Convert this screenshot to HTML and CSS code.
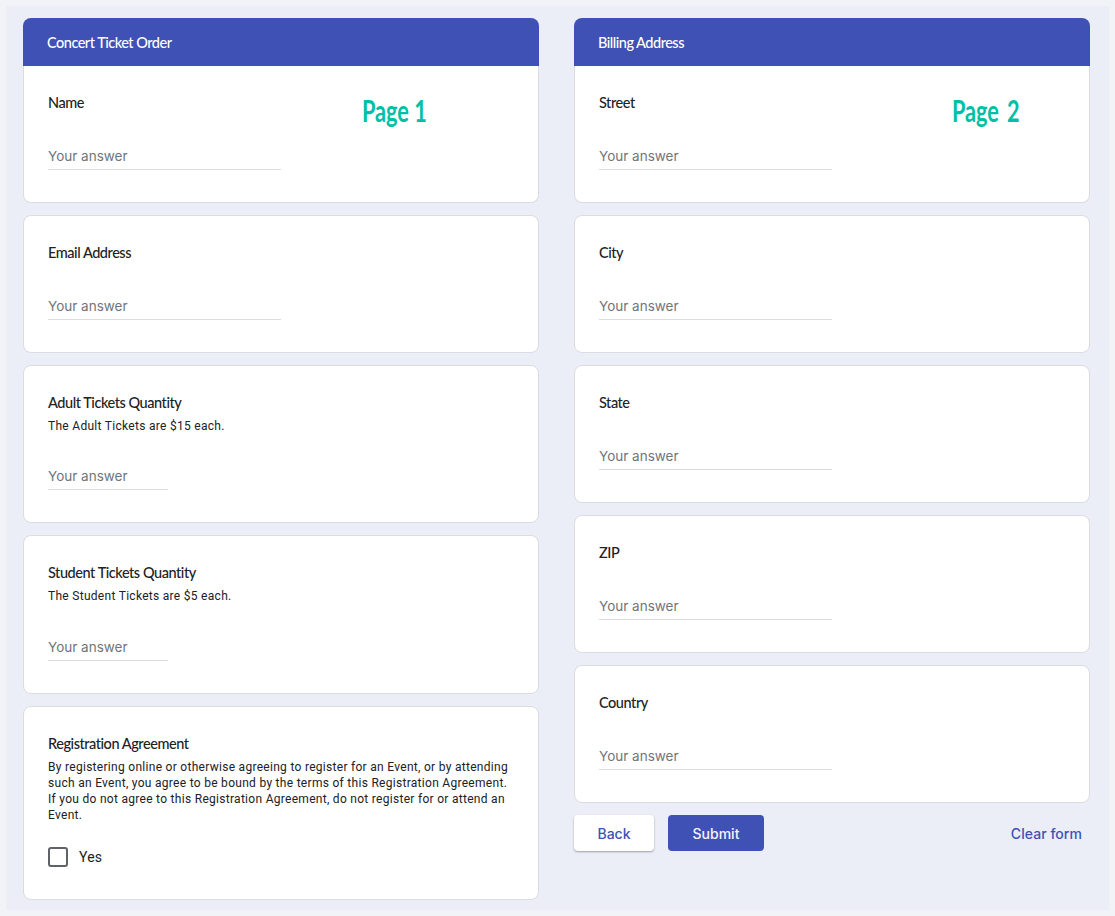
FILE: index.html
```html
<!DOCTYPE html>
<html lang="en">
<head>
<meta charset="utf-8">
<title>Concert Ticket Order</title>
<link rel="stylesheet" href="styles.css">
</head>
<body>
<main class="sheet">
  <section class="column">
    <div class="card-first">
      <header class="banner">Concert Ticket Order</header>
      <div class="card field field-under">
        <label class="question">Name</label>
        <input class="answer" placeholder="Your answer">
      </div>
      <span class="page-note">Page 1</span>
    </div>
    <div class="card field">
      <label class="question">Email Address</label>
      <input class="answer" placeholder="Your answer">
    </div>
    <div class="card field field-desc">
      <label class="question">Adult Tickets Quantity</label>
      <p class="desc">The Adult Tickets are $15 each.</p>
      <input class="answer answer-short" placeholder="Your answer">
    </div>
    <div class="card field field-desc field-student">
      <label class="question">Student Tickets Quantity</label>
      <p class="desc">The Student Tickets are $5 each.</p>
      <input class="answer answer-short" placeholder="Your answer">
    </div>
    <div class="card field field-desc field-agree">
      <label class="question">Registration Agreement</label>
      <p class="desc">By registering online or otherwise agreeing to register for an Event, or by attending such an Event, you agree to be bound by the terms of this Registration Agreement. If you do not agree to this Registration Agreement, do not register for or attend an Event.</p>
      <div class="check-row"><span class="check"></span><span class="check-label">Yes</span></div>
    </div>
  </section>
  <section class="column">
    <div class="card-first">
      <header class="banner">Billing Address</header>
      <div class="card field field-under">
        <label class="question">Street</label>
        <input class="answer" placeholder="Your answer">
      </div>
      <span class="page-note page-note-two">Page 2</span>
    </div>
    <div class="card field">
      <label class="question">City</label>
      <input class="answer" placeholder="Your answer">
    </div>
    <div class="card field">
      <label class="question">State</label>
      <input class="answer" placeholder="Your answer">
    </div>
    <div class="card field">
      <label class="question">ZIP</label>
      <input class="answer" placeholder="Your answer">
    </div>
    <div class="card field">
      <label class="question">Country</label>
      <input class="answer" placeholder="Your answer">
    </div>
    <div class="actions">
      <button class="btn btn-back">Back</button>
      <button class="btn btn-submit">Submit</button>
      <button class="btn btn-clear">Clear form</button>
    </div>
  </section>
</main>
</body>
</html>
```
FILE: styles.css
```css
* { box-sizing: border-box; }
html, body { margin: 0; height: 100%; }
body {
  background: #f1f3f6;
  padding: 6px;
  font-family: Roboto, "Liberation Sans", sans-serif;
}
.sheet {
  background: #ebeef7;
  height: 904px;
  width: 1103px;
  padding: 12px 19px 0 17px;
  display: grid;
  grid-template-columns: 516px 516px;
  column-gap: 35px;
  align-items: start;
}
.column { display: flex; flex-direction: column; gap: 12px; }
.card {
  background: #fff;
  border: 1px solid #dadce0;
  border-radius: 8px;
}
.card-first { position: relative; height: 185px; }
.banner {
  background: #3f51b5;
  color: #fff;
  height: 48px;
  border-radius: 8px 8px 0 0;
  padding: 16px 24px 0;
  font-family: Lato, "Liberation Sans", sans-serif;
  font-size: 14.5px;
  line-height: 18px;
  letter-spacing: -.5px;
  font-weight: 500;
}
.field {
  height: 138px;
  padding: 28px 24px 0;
  display: flex;
  flex-direction: column;
  align-items: flex-start;
}
.field-under {
  height: 137px;
  border-top: 0;
  border-radius: 0 0 8px 8px;
}
.field-desc { height: 158px; }
.field-student { height: 159px; }
.field-agree { height: 194px; }
.question {
  font-family: Lato, "Liberation Sans", sans-serif;
  font-size: 14.5px;
  line-height: 18px;
  letter-spacing: -.45px;
  font-weight: 500;
  color: #202124;
  margin-bottom: 30px;
}
.field-desc .question { margin-bottom: 6px; }
.desc {
  margin: 0 0 28px;
  font-size: 12px;
  line-height: 16px;
  letter-spacing: .29px;
  color: #202124;
  width: 468px;
}
.field-student .desc { margin-bottom: 29px; }
.answer {
  display: block;
  width: 233px;
  height: 28px;
  border: 0;
  border-bottom: 1px solid #dadce0;
  outline: 0;
  padding: 0;
  background: transparent;
  font-family: Inter, Roboto, sans-serif;
  font-size: 13.5px;
  color: #202124;
}
.answer::placeholder { color: #70757a; opacity: 1; }
.answer-short { width: 120px; }
.check-row { display: flex; align-items: center; gap: 11px; margin-top: -4px; }
.check {
  width: 20px;
  height: 20px;
  border: 2px solid #5f6368;
  border-radius: 3px;
}
.check-label { font-size: 14px; letter-spacing: .2px; color: #202124; }
.page-note {
  position: absolute;
  left: 339px;
  top: 74px;
  font-family: Lato, "Liberation Sans", sans-serif;
  font-size: 31px;
  line-height: 36px;
  font-weight: 700;
  color: #00bfa5;
  transform: scaleX(.7);
  transform-origin: left center;
}
.page-note-two { left: 378px; word-spacing: 4px; }
.actions { display: flex; align-items: center; height: 36px; }
.btn {
  height: 36px;
  border: 0;
  border-radius: 4px;
  font-family: Inter, Roboto, sans-serif;
  font-size: 14px;
  font-weight: 500;
  padding: 0;
}
.btn-back {
  width: 80px;
  background: #fff;
  color: #3f51b5;
  box-shadow: 0 1px 2px rgba(60,64,67,.45);
  margin-right: 14px;
}
.btn-submit { width: 96px; background: #3f51b5; color: #f4f5fb; }
.btn-clear { margin-left: auto; margin-right: 8px; background: transparent; color: #3f51b5; letter-spacing: .05px; }
```
